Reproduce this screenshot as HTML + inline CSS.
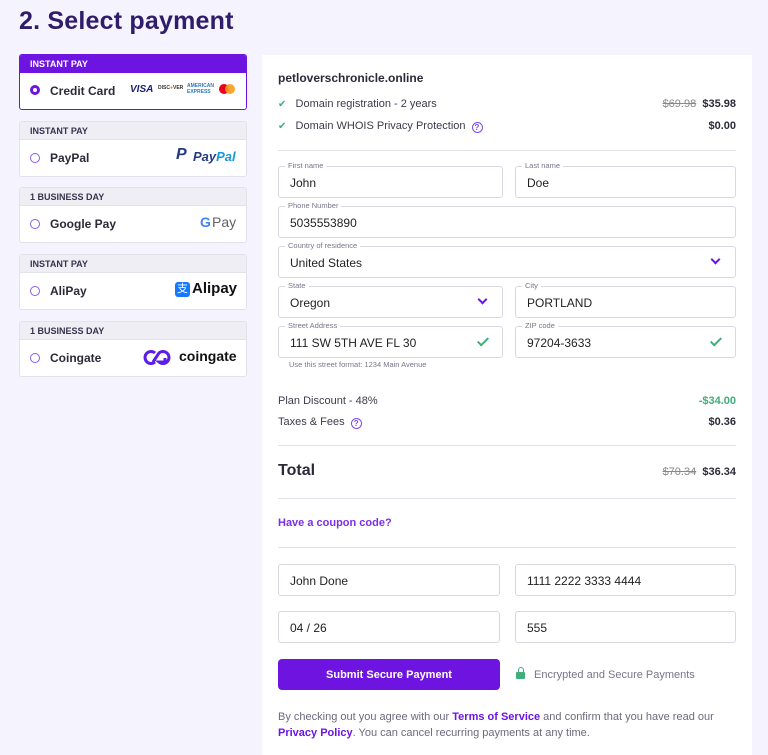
<!DOCTYPE html>
<html><head><meta charset="utf-8"><style>
*{box-sizing:border-box;margin:0;padding:0}
body{width:768px;height:749px;overflow:hidden;background:#f4f3fe;font-family:"Liberation Sans",sans-serif;color:#2f1c6a;position:relative}
.abs{position:absolute}
h1{position:absolute;left:19px;top:7px;font-size:25px;font-weight:bold;color:#2f1c6a;letter-spacing:0.2px}
.card{position:absolute;left:19px;width:228px;height:56px;background:#fff;border:1px solid #e3e2ea;border-radius:3px;overflow:hidden}
.card .hd{height:18px;background:#efeef4;border-bottom:1px solid #e3e2ea;font-size:9px;font-weight:bold;color:#36344d;padding:4px 0 0 10px}
.card .bd{position:relative;height:36px}
.rad{position:absolute;left:10px;top:13px;width:10px;height:10px;border:1.5px solid #8c5cf0;border-radius:50%}
.lbl{position:absolute;left:30px;top:11px;font-size:12px;font-weight:bold;color:#2b2a38}
.sel{border:1.5px solid #6d14e0;height:56px}
.sel .hd{background:#6d14e0;color:#fff;border-bottom:none}
.panel{position:absolute;left:262px;top:55px;width:490px;height:700px;background:#fff}
.t{position:absolute;font-size:11px;color:#3c3b4a}
.r{text-align:right;right:16px}
.chk{color:#3fae7a;font-size:10px}
.hr{position:absolute;left:16px;width:458px;height:1px;background:#e2e1e8}
.f{position:absolute;border:1px solid #d9d8e0;border-radius:3px;height:32px;background:#fff}
.f .l{position:absolute;left:6px;top:-6px;background:#fff;padding:0 3px;font-size:7.5px;color:#77768a}
.f .v{position:absolute;left:11px;top:9px;font-size:12px;color:#222}
.q{display:inline-block;width:11px;height:11px;border:1.3px solid #7b4be8;border-radius:50%;font-size:8px;color:#7b4be8;text-align:center;line-height:9px;vertical-align:-1px;margin-left:6px;font-weight:bold}
.dd{position:absolute;right:16px;top:9px;width:7px;height:7px;border-right:2px solid #6d14e0;border-bottom:2px solid #6d14e0;transform:rotate(45deg)}
.ok{position:absolute;right:16px;top:8px;width:6px;height:11px;border-right:2.5px solid #3fae7a;border-bottom:2.5px solid #3fae7a;transform:rotate(45deg)}
.purple{color:#6d14e0;font-weight:bold}
</style></head><body>
<h1>2. Select payment</h1>

<div class="card sel" style="top:54px"><div class="hd">INSTANT PAY</div><div class="bd"><div class="rad" style="border:3px solid #6d14e0;width:10px;height:10px;top:12px"></div><div class="lbl">Credit Card</div>
<span class="abs" style="left:110px;top:11px;font-size:10px;font-weight:bold;font-style:italic;color:#1a1f71">VISA</span>
<span class="abs" style="left:138px;top:12px;font-size:5px;font-weight:bold;color:#333">DISC<span style="color:#f48120">●</span>VER</span>
<span class="abs" style="left:167px;top:10px;font-size:5px;font-weight:bold;color:#2e77bc;line-height:6px">AMERICAN<br>EXPRESS</span>
<span class="abs" style="left:199px;top:11px;width:10px;height:10px;border-radius:50%;background:#eb001b"></span>
<span class="abs" style="left:205px;top:11px;width:10px;height:10px;border-radius:50%;background:#f79e1b;opacity:.9"></span>
</div></div>

<div class="card" style="top:121px"><div class="hd">INSTANT PAY</div><div class="bd"><div class="rad"></div><div class="lbl">PayPal</div>
<span class="abs" style="left:156px;top:6px;font-size:16px;font-weight:bold;font-style:italic;color:#253b80">P</span>
<span class="abs" style="left:173px;top:9px;font-size:13px;font-weight:bold;font-style:italic;color:#253b80">Pay<span style="color:#179bd7">Pal</span></span></div></div>

<div class="card" style="top:187px"><div class="hd">1 BUSINESS DAY</div><div class="bd"><div class="rad"></div><div class="lbl">Google Pay</div>
<span class="abs" style="left:180px;top:8px;font-size:14px;font-weight:bold;color:#4285f4">G</span><span class="abs" style="left:192px;top:8px;font-size:14px;color:#5f6368">Pay</span></div></div>

<div class="card" style="top:254px"><div class="hd">INSTANT PAY</div><div class="bd"><div class="rad"></div><div class="lbl">AliPay</div>
<span class="abs" style="left:155px;top:9px;width:15px;height:15px;border-radius:3px;background:#1677ff;color:#fff;font-size:11px;text-align:center;line-height:15px">支</span>
<span class="abs" style="left:172px;top:7px;font-size:15px;font-weight:bold;color:#111">Alipay</span></div></div>

<div class="card" style="top:321px"><div class="hd">1 BUSINESS DAY</div><div class="bd"><div class="rad"></div><div class="lbl">Coingate</div>
<svg class="abs" style="left:123px;top:10px" width="28" height="15" viewBox="0 0 28 15"><path d="M12 3a6 6 0 1 0 0 9M10 12l6-9a6 6 0 1 1 0 9h6v-4" fill="none" stroke="#5a1ee6" stroke-width="3"/></svg>
<span class="abs" style="left:159px;top:8px;font-size:14px;font-weight:bold;color:#111">coingate</span></div></div>

<div class="panel">
<div class="t" style="left:16px;top:16px;font-size:12px;font-weight:bold;color:#2b2a38">petloverschronicle.online</div>
<div class="t" style="left:16px;top:43px"><span class="chk">✔</span>&nbsp;&nbsp; Domain registration - 2 years</div>
<div class="t r" style="top:43px"><s style="color:#888">$69.98</s>&nbsp; <b style="color:#2b2a38">$35.98</b></div>
<div class="t" style="left:16px;top:65px"><span class="chk">✔</span>&nbsp;&nbsp; Domain WHOIS Privacy Protection<span class="q">?</span></div>
<div class="t r" style="top:65px"><b style="color:#2b2a38">$0.00</b></div>
<div class="hr" style="top:95px"></div>

<div class="f" style="left:16px;top:111px;width:225px"><span class="l">First name</span><span class="v">John</span></div>
<div class="f" style="left:253px;top:111px;width:221px"><span class="l">Last name</span><span class="v">Doe</span></div>
<div class="f" style="left:16px;top:151px;width:458px"><span class="l">Phone Number</span><span class="v">5035553890</span></div>
<div class="f" style="left:16px;top:191px;width:458px"><span class="l">Country of residence</span><span class="v">United States</span><span class="dd"></span></div>
<div class="f" style="left:16px;top:231px;width:225px"><span class="l">State</span><span class="v">Oregon</span><span class="dd"></span></div>
<div class="f" style="left:253px;top:231px;width:221px"><span class="l">City</span><span class="v">PORTLAND</span></div>
<div class="f" style="left:16px;top:271px;width:225px"><span class="l">Street Address</span><span class="v">111 SW 5TH AVE FL 30</span><span class="ok"></span></div>
<div class="f" style="left:253px;top:271px;width:221px"><span class="l">ZIP code</span><span class="v">97204-3633</span><span class="ok"></span></div>
<div class="t" style="left:27px;top:305px;font-size:7.5px;color:#77768a">Use this street format: 1234 Main Avenue</div>

<div class="t" style="left:16px;top:340px">Plan Discount - 48%</div>
<div class="t r" style="top:340px;color:#3fae7a;font-weight:bold">-$34.00</div>
<div class="t" style="left:16px;top:361px">Taxes &amp; Fees<span class="q">?</span></div>
<div class="t r" style="top:361px;font-weight:bold;color:#2b2a38">$0.36</div>
<div class="hr" style="top:390px"></div>
<div class="t" style="left:16px;top:407px;font-size:16px;font-weight:bold;color:#2b2a38">Total</div>
<div class="t r" style="top:411px"><s style="color:#888">$70.34</s>&nbsp; <b style="color:#2b2a38">$36.34</b></div>
<div class="hr" style="top:443px"></div>
<div class="t purple" style="left:16px;top:462px;color:#7b2fe6">Have a coupon code?</div>
<div class="hr" style="top:492px"></div>

<div class="f" style="left:16px;top:509px;width:222px"><span class="v">John Done</span></div>
<div class="f" style="left:253px;top:509px;width:221px"><span class="v">1111 2222 3333 4444</span></div>
<div class="f" style="left:16px;top:556px;width:222px"><span class="v">04 / 26</span></div>
<div class="f" style="left:253px;top:556px;width:221px"><span class="v">555</span></div>
<div class="abs" style="left:16px;top:604px;width:222px;height:31px;background:#6d14e0;border-radius:4px;color:#fff;font-size:11px;font-weight:bold;text-align:center;line-height:32px">Submit Secure Payment</div>
<div class="abs" style="left:254px;top:617px;width:9px;height:7px;background:#3fae7a;border-radius:1px"></div>
<div class="abs" style="left:255.5px;top:612px;width:6px;height:7px;border:1.5px solid #3fae7a;border-bottom:none;border-radius:3px 3px 0 0"></div>
<div class="t" style="left:272px;top:614px;color:#77768a">Encrypted and Secure Payments</div>
<div class="t" style="left:16px;top:654px;line-height:16px;width:460px;color:#6b6a7c">By checking out you agree with our <span class="purple">Terms of Service</span> and confirm that you have read our <span class="purple">Privacy Policy</span>. You can cancel recurring payments at any time.</div>
</div>
</body></html>
